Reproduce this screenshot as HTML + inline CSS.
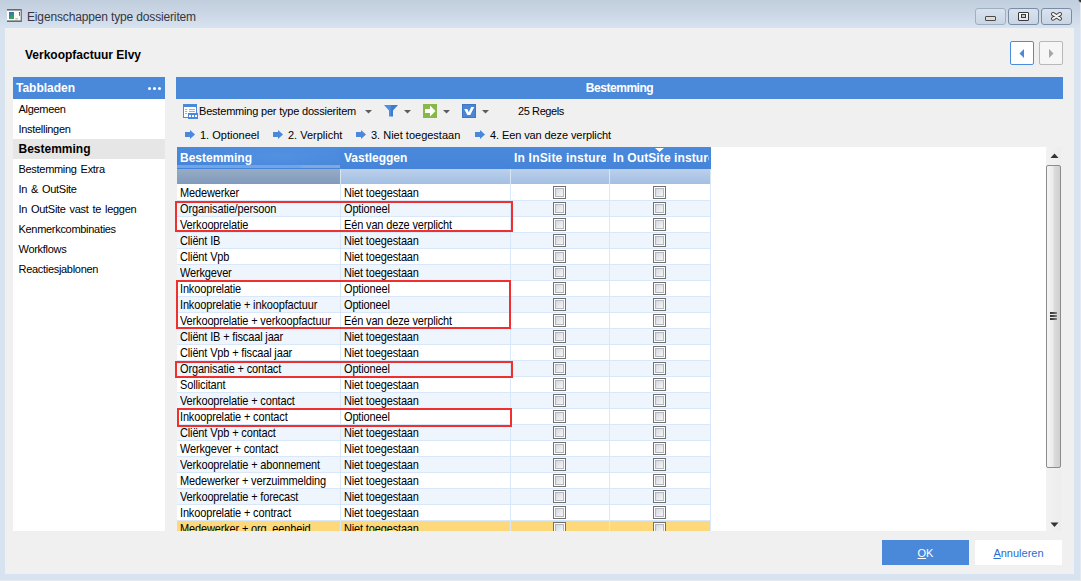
<!DOCTYPE html>
<html><head><meta charset="utf-8">
<style>
*{margin:0;padding:0;box-sizing:border-box}
html,body{width:1081px;height:581px;overflow:hidden}
body{position:relative;font-family:"Liberation Sans",sans-serif;font-size:11px;color:#000;
 background:linear-gradient(#c1cedd 0px,#cbd7e5 14px,#d8e3f0 28px,#d8e3f1 100%)}
.a{position:absolute}
#edgeR{left:1080px;top:0;width:1px;height:581px;background:#e4eaf1}
#edgeB{left:0;top:580px;width:1081px;height:1px;background:#e6e9ed}
#body{left:5px;top:28px;width:1069px;height:546px;background:#f0f0f0}
#title{left:27px;top:10px;font-size:12px;color:#353545;white-space:nowrap;letter-spacing:-0.15px}
.wb{top:8px;height:17px;border:1px solid #8e9db2;border-radius:3px;background:linear-gradient(#d9e3ee,#c9d5e3)}
#heading{left:25px;top:48px;font-size:12px;font-weight:bold;white-space:nowrap}
.nav{top:41px;width:24px;height:24px;border-radius:2px}
#sidebar{left:13px;top:77px;width:152px;height:454px;background:#fff}
#sbh{left:13px;top:77px;width:152px;height:22px;background:#4a88da;color:#fff;font-weight:bold;font-size:12px;padding:4px 0 0 3px}
.si{left:13px;width:152px;height:20px;padding:4px 0 0 5.5px;white-space:nowrap;letter-spacing:-0.3px;word-spacing:1.2px}
#mainh{left:176px;top:77px;width:887px;height:22px;background:#4a88da;color:#fff;font-weight:bold;font-size:12px;text-align:center;padding-top:4px;letter-spacing:-0.45px}
.tb{white-space:nowrap}
#gridbox{left:177px;top:147px;width:869px;height:384px;background:#fff;overflow:hidden}
#scroll{left:1046px;top:147px;width:15px;height:384px;background:#f0f0f0}
.row{position:absolute;left:0;width:534px;height:16px;border-bottom:1px solid #d9e7fa}
.row.alt{background:#eef5fd}
.row.sel{background:#fdd97b}
.c1,.c2{position:absolute;top:1px;white-space:nowrap;letter-spacing:-0.15px;transform:scaleY(1.12);transform-origin:0 0}
.c1{left:3px}
.c2{left:167px}
.vl{position:absolute;top:21px;width:1px;height:400px;background:#d9e7fa}
.cb{position:absolute;top:1px;width:13px;height:13px;border:1px solid #707070;background:#fff}
.cb::after{content:"";box-sizing:border-box;position:absolute;left:1px;top:1px;width:9px;height:9px;border:1px solid #b4b7bd;background:linear-gradient(135deg,#d4d8e0,#f6f6f6)}
.red{position:absolute;border:2px solid #f0302f}
</style></head><body>
<div class="a" id="edgeR"></div><div class="a" style="left:1078px;top:0;width:3px;height:3px;background:radial-gradient(circle at 100% 0,#333 0,#333 1.5px,rgba(51,51,51,0) 3px)"></div><div class="a" id="edgeB"></div>
<!-- title icon -->
<svg class="a" style="left:7px;top:9px" width="15" height="13" viewBox="0 0 15 13">

<rect x="0" y="0" width="14.5" height="13" fill="#fbfbfb"/>
<rect x="0" y="0" width="14.5" height="1.6" fill="#6a6a6a"/>
<rect x="0" y="11.4" width="14.5" height="1.6" fill="#6a6a6a"/>
<rect x="13.6" y="0" width="1.4" height="13" rx="0.6" fill="#7a7a7a"/>

<rect x="8.3" y="9" width="2.6" height="1.6" fill="#c4c4c4"/>

</svg>
<div class="a" style="left:9px;top:12px;width:5px;height:7px;background:linear-gradient(160deg,#2f6cb8,#3fae4a)"></div><div class="a" style="left:19px;top:12px;width:1px;height:4px;background:linear-gradient(#2a62c0,#58b848)"></div>
<div class="a" id="title">Eigenschappen type dossieritem</div>
<div class="a wb" style="left:975px;width:31px;border-color:#a1afc2"></div>
<div class="a wb" style="left:1008px;width:31px;border-color:#7a8ca5"></div>
<div class="a wb" style="left:1041px;width:31px;border-color:#7a8ca5"></div>
<div class="a" style="left:985px;top:16px;width:11px;height:5px;border:1px solid #4a4a4a;border-radius:1px;background:#dcdcdc"></div>
<div class="a" style="left:1018px;top:12px;width:11px;height:9px;border:1px solid #3a3a3a;border-radius:1px;background:linear-gradient(#fafafa,#e4e4e4)"></div>
<div class="a" style="left:1021px;top:14px;width:5px;height:4px;border:1px solid #3a3a3a;background:#c0d0e0"></div>
<svg class="a" style="left:1050px;top:11px" width="13" height="11" viewBox="0 0 13 11"><path d="M3 3 L10 7.6 M10 3 L3 7.6" stroke="#3a3a3a" stroke-width="4" stroke-linecap="round"/><path d="M3 3 L10 7.6 M10 3 L3 7.6" stroke="#f2f2f2" stroke-width="2.2" stroke-linecap="round"/></svg>

<div class="a" id="body"></div>
<div class="a" id="heading">Verkoopfactuur Elvy</div>
<div class="a nav" style="left:1010px;border:1px solid #4a8ce0;background:#fff"></div>
<svg class="a" style="left:1019px;top:48.5px" width="6" height="10"><path d="M5 0 L5 9 L0.5 4.5 Z" fill="#4a88da"/></svg>
<div class="a nav" style="left:1039px;border:1px solid #b8b8b8;background:#f6f6f6"></div>
<svg class="a" style="left:1048px;top:48.5px" width="6" height="10"><path d="M1 0 L1 9 L5.5 4.5 Z" fill="#a6a6a6"/></svg>

<div class="a" id="sidebar"></div>
<div class="a" id="sbh">Tabbladen</div>
<div class="a" style="left:148px;top:87px;width:3px;height:3px;background:#fff;border-radius:50%;box-shadow:5px 0 0 #fff,10px 0 0 #fff"></div>
<div class="a si" style="top:99px">Algemeen</div>
<div class="a si" style="top:119px">Instellingen</div>
<div class="a si" style="top:139px;background:#e6e6e6;font-weight:bold;font-size:12px;padding-top:3px;letter-spacing:0">Bestemming</div>
<div class="a si" style="top:159px">Bestemming Extra</div>
<div class="a si" style="top:179px">In &amp; OutSite</div>
<div class="a si" style="top:199px">In OutSite vast te leggen</div>
<div class="a si" style="top:219px">Kenmerkcombinaties</div>
<div class="a si" style="top:239px">Workflows</div>
<div class="a si" style="top:259px">Reactiesjablonen</div>

<div class="a" id="mainh">Bestemming</div>

<!-- toolbar row 1 -->
<svg class="a" style="left:183px;top:104px" width="16" height="16" viewBox="0 0 16 16">
<rect x="0.5" y="0.5" width="13" height="13" fill="#fff" stroke="#4a88da"/>
<rect x="0" y="0" width="14" height="3" fill="#4a88da"/>
<path d="M2 5.5h2.2M6 5.5h6M2 7.5h2.2M6 7.5h6M2 9.5h2.2" stroke="#a8aeb6" stroke-width="1"/>
<rect x="5" y="9" width="10" height="6" fill="#4a88da"/>
<rect x="6" y="11" width="2" height="2" fill="#fff"/><rect x="9" y="11" width="2" height="2" fill="#fff"/><rect x="12" y="11" width="2" height="2" fill="#fff"/>
</svg>
<div class="a tb" style="left:199px;top:105px;letter-spacing:-0.2px">Bestemming per type dossieritem</div>
<svg class="a" style="left:365px;top:110px" width="8" height="5"><path d="M0 0h7l-3.5 3.5z" fill="#5c5c5c"/></svg>
<svg class="a" style="left:384px;top:104px" width="15" height="13" viewBox="0 0 15 13"><path d="M0 1h7v11.5h-2v-6z" fill="#4a8fe0"/><path d="M14 1h-7v11.5h2v-6z" fill="#3c7bd0"/></svg>
<svg class="a" style="left:404px;top:110px" width="8" height="5"><path d="M0 0h7l-3.5 3.5z" fill="#5c5c5c"/></svg>
<svg class="a" style="left:423px;top:104px" width="14" height="14" viewBox="0 0 14 14"><rect width="14" height="14" fill="#88b846"/><path d="M2 5H7V1.5L12.5 7L7 12.5V9H2Z" fill="#fff"/></svg>
<svg class="a" style="left:443px;top:110px" width="8" height="5"><path d="M0 0h7l-3.5 3.5z" fill="#5c5c5c"/></svg>
<svg class="a" style="left:462px;top:104px" width="14" height="14" viewBox="0 0 14 14"><rect x="0.5" y="0.5" width="13" height="13" fill="#4a86d4" stroke="#3f77c4"/><path d="M2.2 5H5.4L6.8 8.2L9.2 3H12.2L8.3 11H5.3Z" fill="#fff"/></svg>
<svg class="a" style="left:482px;top:110px" width="8" height="5"><path d="M0 0h7l-3.5 3.5z" fill="#5c5c5c"/></svg>
<div class="a tb" style="left:518px;top:105px;letter-spacing:-0.4px">25 Regels</div>

<!-- toolbar row 2 -->
<svg class="a" style="left:185px;top:130px" width="11" height="9" viewBox="0 0 11 9"><path d="M0 2h5v-2l5 4.5-5 4.5v-2h-5z" fill="#4a88da"/></svg>
<div class="a tb" style="left:200px;top:129px">1. Optioneel</div>
<svg class="a" style="left:273px;top:130px" width="11" height="9" viewBox="0 0 11 9"><path d="M0 2h5v-2l5 4.5-5 4.5v-2h-5z" fill="#4a88da"/></svg>
<div class="a tb" style="left:288px;top:129px">2. Verplicht</div>
<svg class="a" style="left:356px;top:130px" width="11" height="9" viewBox="0 0 11 9"><path d="M0 2h5v-2l5 4.5-5 4.5v-2h-5z" fill="#4a88da"/></svg>
<div class="a tb" style="left:371px;top:129px">3. Niet toegestaan</div>
<svg class="a" style="left:475px;top:130px" width="11" height="9" viewBox="0 0 11 9"><path d="M0 2h5v-2l5 4.5-5 4.5v-2h-5z" fill="#4a88da"/></svg>
<div class="a tb" style="left:490px;top:129px;letter-spacing:-0.1px">4. Een van deze verplicht</div>

<!-- grid -->
<div class="a" id="gridbox">
 <div class="a" style="left:0;top:0;width:534px;height:22px;background:linear-gradient(#4b89dc,#4584d8)"></div>
 <div class="a" style="left:0;top:0;width:163px;height:18px;background:radial-gradient(ellipse 60% 100% at 62% 50%,#5290e2,rgba(74,136,218,0))"></div><div class="a" style="left:0;top:18px;width:163px;height:3px;background:linear-gradient(90deg,#6ea6e6,#6ea6e6 75%,#80a8d8 77%,#80a8d8)"></div>
 <div class="a" style="left:3px;top:4px;color:#fff;font-weight:bold;font-size:12px;white-space:nowrap">Bestemming</div>
 <div class="a" style="left:167px;top:4px;color:#fff;font-weight:bold;font-size:12px;white-space:nowrap">Vastleggen</div>
 <div class="a" style="left:337px;top:4px;width:92px;overflow:hidden;letter-spacing:0.2px;color:#fff;font-weight:bold;font-size:12px;white-space:nowrap">In InSite insture</div>
 <div class="a" style="left:436px;top:4px;width:96px;overflow:hidden;letter-spacing:0.1px;color:#fff;font-weight:bold;font-size:12px;white-space:nowrap">In OutSite insturen</div>
 <svg class="a" style="left:478px;top:1px" width="10" height="5"><path d="M0 0h9l-4.5 4z" fill="#fff"/></svg>
 <div class="a" style="left:0;top:22px;width:163px;height:15px;background:linear-gradient(#98abc3,#7f9bbd)"></div>
 <div class="a" style="left:164px;top:22px;width:370px;height:15px;background:linear-gradient(#bcd0ea,#a3bfe3)"></div>
 <div class="a" style="left:163px;top:22px;width:1px;height:15px;background:#d8e5f4"></div>
 <div class="a" style="left:333px;top:22px;width:1px;height:15px;background:#d8e5f4"></div>
 <div class="a" style="left:432px;top:22px;width:1px;height:15px;background:#d8e5f4"></div>
 <div class="a" style="left:533px;top:22px;width:1px;height:15px;background:#d8e5f4"></div>
 <!--ROWS--><div class="row" style="top:38px"><span class="c1">Medewerker</span><span class="c2">Niet toegestaan</span><span class="cb" style="left:376px"></span><span class="cb" style="left:476px"></span></div>
<div class="row alt" style="top:54px"><span class="c1">Organisatie/persoon</span><span class="c2">Optioneel</span><span class="cb" style="left:376px"></span><span class="cb" style="left:476px"></span></div>
<div class="row" style="top:70px"><span class="c1">Verkooprelatie</span><span class="c2">Eén van deze verplicht</span><span class="cb" style="left:376px"></span><span class="cb" style="left:476px"></span></div>
<div class="row alt" style="top:86px"><span class="c1">Cliënt IB</span><span class="c2">Niet toegestaan</span><span class="cb" style="left:376px"></span><span class="cb" style="left:476px"></span></div>
<div class="row" style="top:102px"><span class="c1">Cliënt Vpb</span><span class="c2">Niet toegestaan</span><span class="cb" style="left:376px"></span><span class="cb" style="left:476px"></span></div>
<div class="row alt" style="top:118px"><span class="c1">Werkgever</span><span class="c2">Niet toegestaan</span><span class="cb" style="left:376px"></span><span class="cb" style="left:476px"></span></div>
<div class="row" style="top:134px"><span class="c1">Inkooprelatie</span><span class="c2">Optioneel</span><span class="cb" style="left:376px"></span><span class="cb" style="left:476px"></span></div>
<div class="row alt" style="top:150px"><span class="c1">Inkooprelatie + inkoopfactuur</span><span class="c2">Optioneel</span><span class="cb" style="left:376px"></span><span class="cb" style="left:476px"></span></div>
<div class="row" style="top:166px"><span class="c1">Verkooprelatie + verkoopfactuur</span><span class="c2">Eén van deze verplicht</span><span class="cb" style="left:376px"></span><span class="cb" style="left:476px"></span></div>
<div class="row alt" style="top:182px"><span class="c1">Cliënt IB + fiscaal jaar</span><span class="c2">Niet toegestaan</span><span class="cb" style="left:376px"></span><span class="cb" style="left:476px"></span></div>
<div class="row" style="top:198px"><span class="c1">Cliënt Vpb + fiscaal jaar</span><span class="c2">Niet toegestaan</span><span class="cb" style="left:376px"></span><span class="cb" style="left:476px"></span></div>
<div class="row alt" style="top:214px"><span class="c1">Organisatie + contact</span><span class="c2">Optioneel</span><span class="cb" style="left:376px"></span><span class="cb" style="left:476px"></span></div>
<div class="row" style="top:230px"><span class="c1">Sollicitant</span><span class="c2">Niet toegestaan</span><span class="cb" style="left:376px"></span><span class="cb" style="left:476px"></span></div>
<div class="row alt" style="top:246px"><span class="c1">Verkooprelatie + contact</span><span class="c2">Niet toegestaan</span><span class="cb" style="left:376px"></span><span class="cb" style="left:476px"></span></div>
<div class="row" style="top:262px"><span class="c1">Inkooprelatie + contact</span><span class="c2">Optioneel</span><span class="cb" style="left:376px"></span><span class="cb" style="left:476px"></span></div>
<div class="row alt" style="top:278px"><span class="c1">Cliënt Vpb + contact</span><span class="c2">Niet toegestaan</span><span class="cb" style="left:376px"></span><span class="cb" style="left:476px"></span></div>
<div class="row" style="top:294px"><span class="c1">Werkgever + contact</span><span class="c2">Niet toegestaan</span><span class="cb" style="left:376px"></span><span class="cb" style="left:476px"></span></div>
<div class="row alt" style="top:310px"><span class="c1">Verkooprelatie + abonnement</span><span class="c2">Niet toegestaan</span><span class="cb" style="left:376px"></span><span class="cb" style="left:476px"></span></div>
<div class="row" style="top:326px"><span class="c1">Medewerker + verzuimmelding</span><span class="c2">Niet toegestaan</span><span class="cb" style="left:376px"></span><span class="cb" style="left:476px"></span></div>
<div class="row alt" style="top:342px"><span class="c1">Verkooprelatie + forecast</span><span class="c2">Niet toegestaan</span><span class="cb" style="left:376px"></span><span class="cb" style="left:476px"></span></div>
<div class="row" style="top:358px"><span class="c1">Inkooprelatie + contract</span><span class="c2">Niet toegestaan</span><span class="cb" style="left:376px"></span><span class="cb" style="left:476px"></span></div>
<div class="row sel" style="top:374px"><span class="c1">Medewerker + org. eenheid</span><span class="c2">Niet toegestaan</span><span class="cb" style="left:376px"></span><span class="cb" style="left:476px"></span></div>
<div class="vl" style="left:163px;top:37px;height:347px"></div>
<div class="vl" style="left:333px;top:37px;height:347px"></div>
<div class="vl" style="left:432px;top:37px;height:347px"></div>
<div class="vl" style="left:533px;top:37px;height:347px"></div><!--/ROWS-->
</div>
<!--RED--><div class="a red" style="left:175px;top:201px;width:338px;height:31px"></div>
<div class="a red" style="left:176px;top:280px;width:335px;height:49px"></div>
<div class="a red" style="left:175px;top:361px;width:338px;height:17px"></div>
<div class="a red" style="left:177px;top:408px;width:335px;height:19px"></div><!--/RED-->
<div class="a" id="scroll" style="background:linear-gradient(90deg,#f2f2f2,#f0f0f0 50%,#ebebeb 52%,#efefef 56%,#ededed)"></div>
<svg class="a" style="left:1050px;top:153px" width="9" height="6"><path d="M0.5 5h8L4.5 0.5z" fill="#333"/></svg>
<div class="a" style="left:1046px;top:165px;width:15px;height:303px;border:1px solid #8c8c8c;border-radius:2px;background:linear-gradient(90deg,#f4f4f4,#ececec 45%,#dcdcdc 55%,#cfcfcf)"></div>
<div class="a" style="left:1050px;top:312px;width:7px;height:2px;background:linear-gradient(90deg,#2e2e2e,#555 60%,#8a8a8a)"></div><div class="a" style="left:1050px;top:315px;width:7px;height:2px;background:linear-gradient(90deg,#2e2e2e,#555 60%,#8a8a8a)"></div><div class="a" style="left:1050px;top:318px;width:7px;height:2px;background:linear-gradient(90deg,#2e2e2e,#555 60%,#8a8a8a)"></div>
<svg class="a" style="left:1050px;top:522px" width="9" height="6"><path d="M0.5 0.5h8L4.5 5z" fill="#333"/></svg>

<div class="a" style="left:882px;top:540px;width:87px;height:25px;background:#4a88da;color:#fff;text-align:center;padding-top:7px"><u>O</u>K</div>
<div class="a" style="left:975px;top:540px;width:87px;height:25px;background:#fff;color:#2c6bd0;text-align:center;padding-top:7px"><u>A</u>nnuleren</div>
</body></html>
